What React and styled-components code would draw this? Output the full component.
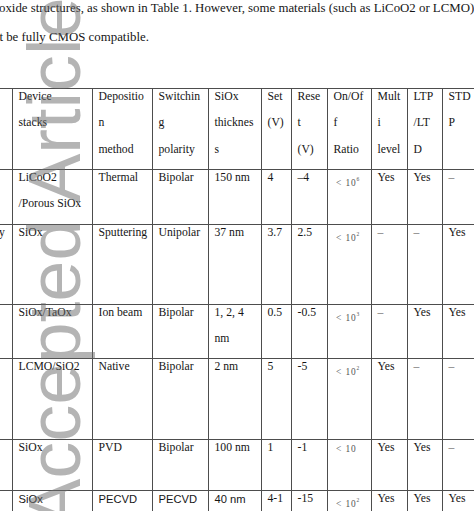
import React from "react";
import styled, { createGlobalStyle } from "styled-components";

const GlobalStyle = createGlobalStyle`
  html, body {
    margin: 0;
    padding: 0;
    background: #ffffff;
  }
`;

const Page = styled.div`
  position: relative;
  width: 474px;
  height: 511px;
  overflow: hidden;
  background: #ffffff;
  font-family: "Liberation Serif", "Times New Roman", serif;
  color: #161616;
`;

const Paragraph = styled.div`
  margin-top: -5.7px;
  font-size: 12.85px;
  line-height: 29px;
  white-space: nowrap;
`;

const ParaLine = styled.div`
  margin-left: ${(p) => p.$shift || 0}px;
`;

const Table = styled.table`
  margin-top: 35.7px;
  margin-left: -42px;
  border-collapse: collapse;
  table-layout: fixed;
  width: 524px;
`;

const Row = styled.tr`
  height: ${(p) => p.$h}px;
`;

const Cell = styled.td`
  border: 1px solid #4d4d4d;
  padding: 0 3px 0 5.5px;
  vertical-align: top;
  line-height: 26.5px;
  white-space: nowrap;
  font-family: ${(p) =>
    p.$sans
      ? '"Liberation Sans", Arial, sans-serif'
      : '"Liberation Serif", "Times New Roman", serif'};
  font-size: ${(p) => (p.$sans ? "11.2px" : "11.7px")};
`;

const CellText = styled.div`
  margin-top: -5.5px;
`;

const Ratio = styled.div`
  margin-top: -4px;
  padding-left: 2.5px;
  font-size: 9.4px;
  letter-spacing: 0.9px;
  color: #555555;

  sup {
    font-size: 5.5px;
    letter-spacing: 0;
    vertical-align: 5px;
  }
`;

const Dash = styled.span`
  color: #6a6a6a;
`;

const Watermark = styled.div`
  position: absolute;
  left: 17.5px;
  top: 528px;
  transform-origin: 0 0;
  transform: rotate(-90deg);
  font-family: "Liberation Sans", Arial, sans-serif;
  font-size: 74px;
  line-height: 1;
  white-space: nowrap;
  color: rgba(105, 105, 105, 0.5);
  pointer-events: none;
`;

const widths = [54, 80, 60, 56, 53, 30, 36, 44, 36, 35, 40];

const header = [
  [""],
  ["Device", "stacks"],
  ["Depositio", "n", "method"],
  ["Switchin", "g", "polarity"],
  ["SiOx", "thicknes", "s"],
  ["Set", "(V)"],
  ["Rese", "t", "(V)"],
  ["On/Of", "f", "Ratio"],
  ["Mult", "i", "level"],
  ["LTP", "/LT", "D"],
  ["STD", "P"],
];

const D = "–";

const rows = [
  { h: 55, cells: [[""], ["LiCoO2", "/Porous SiOx"], ["Thermal"], ["Bipolar"], ["150 nm"], ["4"], ["–4"]], ratio: "6", rest: ["Yes", "Yes", D] },
  { h: 80, cells: [["Memory"], ["SiOx"], ["Sputtering"], ["Unipolar"], ["37 nm"], ["3.7"], ["2.5"]], ratio: "2", rest: [D, D, "Yes"] },
  { h: 54, cells: [[""], ["SiOx/TaOx"], ["Ion beam"], ["Bipolar"], ["1, 2, 4", "nm"], ["0.5"], ["-0.5"]], ratio: "3", rest: [D, "Yes", "Yes"] },
  { h: 81, cells: [[""], ["LCMO/SiO2"], ["Native"], ["Bipolar"], ["2 nm"], ["5"], ["-5"]], ratio: "2", rest: ["Yes", D, D] },
  { h: 51, cells: [[""], ["SiOx"], ["PVD"], ["Bipolar"], ["100 nm"], ["1"], ["-1"]], ratio: "", rest: ["Yes", "Yes", D] },
  { h: 60, sans: [1, 2, 3, 4], cells: [[""], ["SiOx"], ["PECVD"], ["PECVD"], ["40 nm"], ["4-1"], ["-15"]], ratio: "2", rest: ["Yes", "Yes", "Yes"] },
];

function Lines({ lines }) {
  return (
    <CellText>
      {lines.map((line, i) => (
        <div key={i}>{line === D ? <Dash>{line}</Dash> : line || "\u00a0"}</div>
      ))}
    </CellText>
  );
}

export default function App() {
  return (
    <Page>
      <GlobalStyle />
      <Paragraph>
        <ParaLine $shift={-1}>
          oxide structures, as shown in Table 1. However, some materials (such as LiCoO2 or LCMO) may
        </ParaLine>
        <ParaLine $shift={-22}>must be fully CMOS compatible.</ParaLine>
      </Paragraph>

      <Table>
        <colgroup>
          {widths.map((w, i) => (
            <col key={i} style={{ width: w }} />
          ))}
        </colgroup>
        <tbody>
          <Row $h={81}>
            {header.map((lines, i) => (
              <Cell key={i}>
                <Lines lines={lines} />
              </Cell>
            ))}
          </Row>
          {rows.map((row, r) => (
            <Row key={r} $h={row.h}>
              {row.cells.map((lines, i) => (
                <Cell key={i} $sans={row.sans && row.sans.includes(i)}>
                  <Lines lines={lines} />
                </Cell>
              ))}
              <Cell>
                <Ratio>
                  &lt; 10{row.ratio && <sup>{row.ratio}</sup>}
                </Ratio>
              </Cell>
              {row.rest.map((v, i) => (
                <Cell key={i}>
                  <Lines lines={[v]} />
                </Cell>
              ))}
            </Row>
          ))}
        </tbody>
      </Table>

      <Watermark>Accepted Article</Watermark>
    </Page>
  );
}
